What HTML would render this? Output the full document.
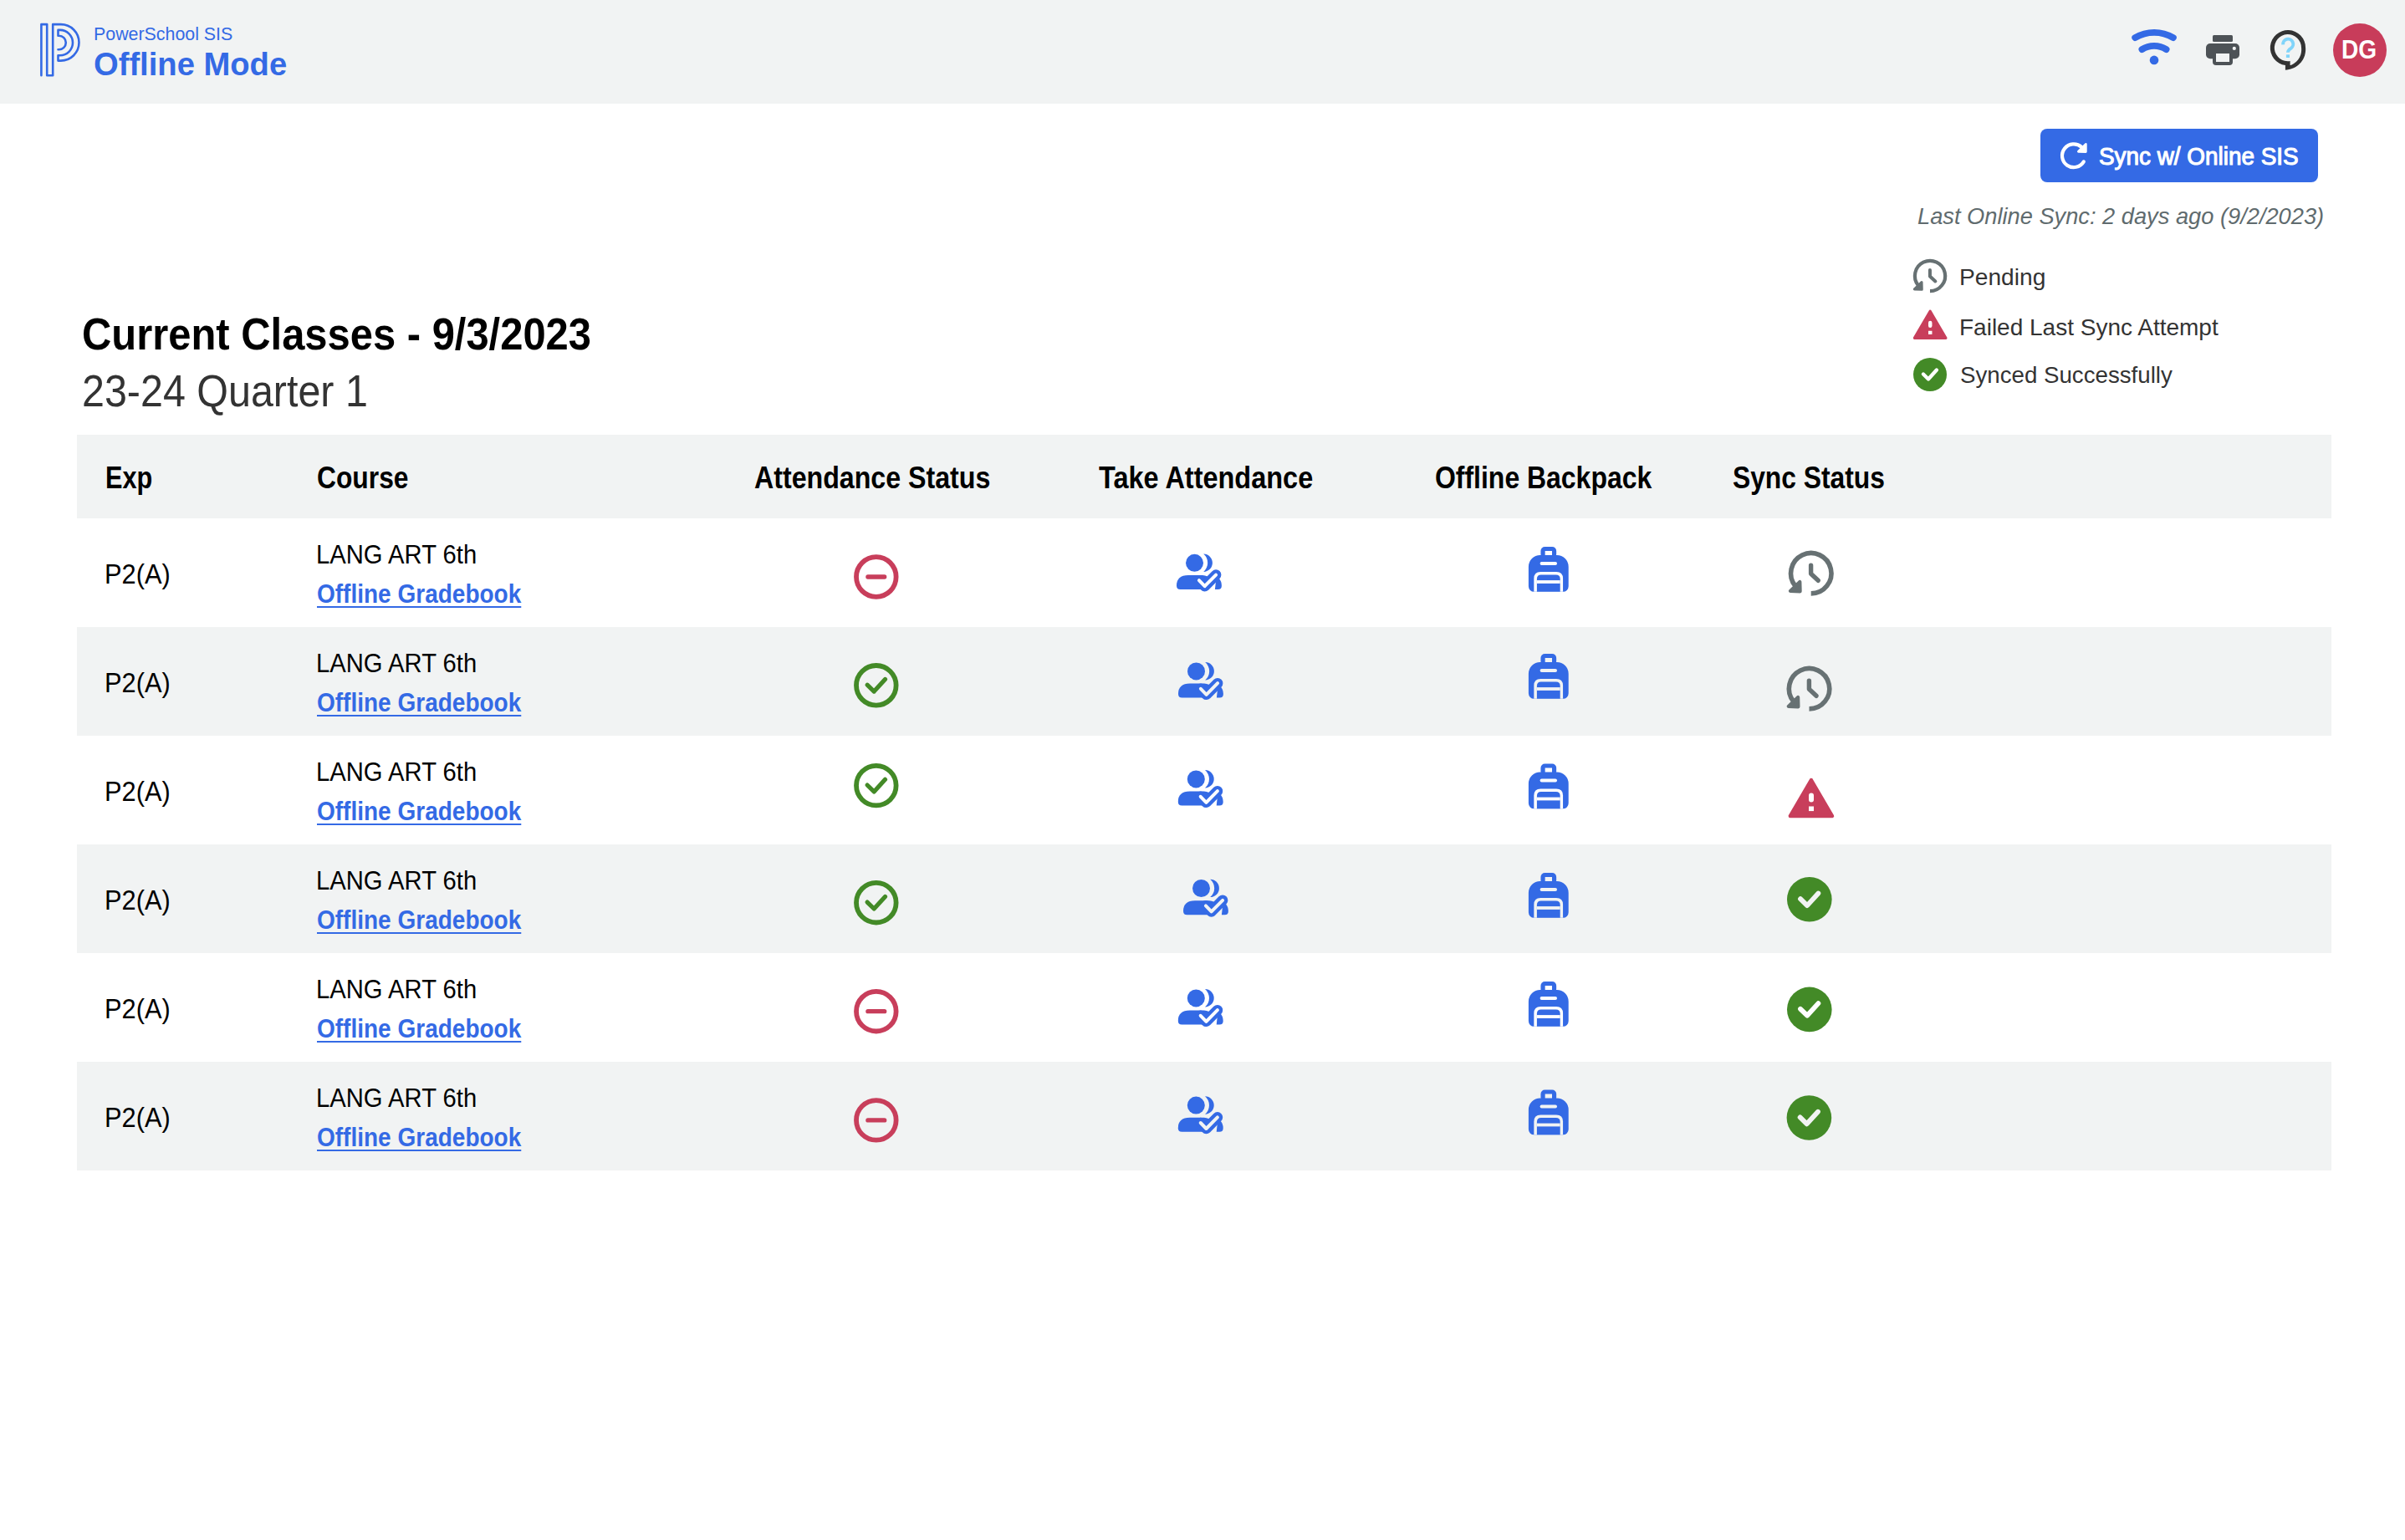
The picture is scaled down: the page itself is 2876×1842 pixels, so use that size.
<!DOCTYPE html>
<html><head><meta charset="utf-8">
<style>
html,body{margin:0;padding:0;}
body{width:2876px;height:1842px;position:relative;overflow:hidden;background:#fff;font-family:"Liberation Sans",sans-serif;}
.t{position:absolute;line-height:1;white-space:nowrap;transform-origin:0 0;}
.band{position:absolute;left:92px;width:2696px;background:#f1f3f3;}
a{color:inherit;}
</style></head><body>
<div style="position:absolute;left:0;top:0;width:2876px;height:124px;background:#f1f3f3;"></div>
<div style="position:absolute;left:2440px;top:154px;width:332px;height:64px;background:#346ae5;border-radius:8px;"></div>
<div class="band" style="top:520px;height:100px;"></div>
<div class="band" style="top:750px;height:130px;"></div>
<div class="band" style="top:1010px;height:130px;"></div>
<div class="band" style="top:1270px;height:130px;"></div>
<div class="t" style="left:111.86px;top:29.90px;font-size:22px;color:#346ae5;font-weight:normal;font-style:normal;transform:scaleX(0.9714);">PowerSchool SIS</div>
<div class="t" style="left:112.00px;top:58.00px;font-size:38px;color:#346ae5;font-weight:bold;font-style:normal;transform:scaleX(1.0044);">Offline Mode</div>
<div class="t" style="left:2799.91px;top:43.50px;font-size:31.5px;color:#fff;font-weight:bold;font-style:normal;transform:scaleX(0.8932);z-index:2;">DG</div>
<div class="t" style="left:2510.08px;top:173.30px;font-size:29px;color:#fff;font-weight:normal;font-style:normal;transform:scaleX(0.9611);z-index:2;-webkit-text-stroke:1.1px #fff;">Sync w/ Online SIS</div>
<div class="t" style="left:2293.43px;top:245.00px;font-size:28px;color:#5f6b6e;font-weight:normal;font-style:italic;transform:scaleX(0.9730);">Last Online Sync: 2 days ago (9/2/2023)</div>
<div class="t" style="left:2342.99px;top:317.80px;font-size:28px;color:#333;font-weight:normal;font-style:normal;transform:scaleX(1.0061);">Pending</div>
<div class="t" style="left:2343.00px;top:377.70px;font-size:28px;color:#333;font-weight:normal;font-style:normal;transform:scaleX(1.0000);">Failed Last Sync Attempt</div>
<div class="t" style="left:2344.01px;top:435.00px;font-size:28px;color:#333;font-weight:normal;font-style:normal;transform:scaleX(0.9883);">Synced Successfully</div>
<div class="t" style="left:97.69px;top:372.20px;font-size:54px;color:#000;font-weight:bold;font-style:normal;transform:scaleX(0.9058);">Current Classes - 9/3/2023</div>
<div class="t" style="left:97.58px;top:441.00px;font-size:53.5px;color:#333;font-weight:normal;font-style:normal;transform:scaleX(0.9051);">23-24 Quarter 1</div>
<div class="t" style="left:126.30px;top:553.70px;font-size:36px;color:#000;font-weight:bold;font-style:normal;transform:scaleX(0.8524);">Exp</div>
<div class="t" style="left:378.62px;top:553.70px;font-size:36px;color:#000;font-weight:bold;font-style:normal;transform:scaleX(0.8828);">Course</div>
<div class="t" style="left:901.61px;top:553.70px;font-size:36px;color:#000;font-weight:bold;font-style:normal;transform:scaleX(0.8933);">Attendance Status</div>
<div class="t" style="left:1313.80px;top:553.70px;font-size:36px;color:#000;font-weight:bold;font-style:normal;transform:scaleX(0.9018);">Take Attendance</div>
<div class="t" style="left:1715.61px;top:553.70px;font-size:36px;color:#000;font-weight:bold;font-style:normal;transform:scaleX(0.8873);">Offline Backpack</div>
<div class="t" style="left:2072.12px;top:553.70px;font-size:36px;color:#000;font-weight:bold;font-style:normal;transform:scaleX(0.8824);">Sync Status</div>
<div class="t" style="left:124.70px;top:670.00px;font-size:33px;color:#000;font-weight:normal;font-style:normal;transform:scaleX(0.9335);">P2(A)</div>
<div class="t" style="left:377.62px;top:647.75px;font-size:31px;color:#000;font-weight:normal;font-style:normal;transform:scaleX(0.9425);">LANG ART 6th</div>
<div class="t" style="left:378.60px;top:695.25px;font-size:31px;color:#346ae5;font-weight:bold;font-style:normal;transform:scaleX(0.9033);"><span style="text-decoration:underline;text-decoration-thickness:2px;text-underline-offset:4px;">Offline Gradebook</span></div>
<div class="t" style="left:124.70px;top:800.00px;font-size:33px;color:#000;font-weight:normal;font-style:normal;transform:scaleX(0.9335);">P2(A)</div>
<div class="t" style="left:377.62px;top:777.75px;font-size:31px;color:#000;font-weight:normal;font-style:normal;transform:scaleX(0.9425);">LANG ART 6th</div>
<div class="t" style="left:378.60px;top:825.25px;font-size:31px;color:#346ae5;font-weight:bold;font-style:normal;transform:scaleX(0.9033);"><span style="text-decoration:underline;text-decoration-thickness:2px;text-underline-offset:4px;">Offline Gradebook</span></div>
<div class="t" style="left:124.70px;top:930.00px;font-size:33px;color:#000;font-weight:normal;font-style:normal;transform:scaleX(0.9335);">P2(A)</div>
<div class="t" style="left:377.62px;top:907.75px;font-size:31px;color:#000;font-weight:normal;font-style:normal;transform:scaleX(0.9425);">LANG ART 6th</div>
<div class="t" style="left:378.60px;top:955.25px;font-size:31px;color:#346ae5;font-weight:bold;font-style:normal;transform:scaleX(0.9033);"><span style="text-decoration:underline;text-decoration-thickness:2px;text-underline-offset:4px;">Offline Gradebook</span></div>
<div class="t" style="left:124.70px;top:1060.00px;font-size:33px;color:#000;font-weight:normal;font-style:normal;transform:scaleX(0.9335);">P2(A)</div>
<div class="t" style="left:377.62px;top:1037.75px;font-size:31px;color:#000;font-weight:normal;font-style:normal;transform:scaleX(0.9425);">LANG ART 6th</div>
<div class="t" style="left:378.60px;top:1085.25px;font-size:31px;color:#346ae5;font-weight:bold;font-style:normal;transform:scaleX(0.9033);"><span style="text-decoration:underline;text-decoration-thickness:2px;text-underline-offset:4px;">Offline Gradebook</span></div>
<div class="t" style="left:124.70px;top:1190.00px;font-size:33px;color:#000;font-weight:normal;font-style:normal;transform:scaleX(0.9335);">P2(A)</div>
<div class="t" style="left:377.62px;top:1167.75px;font-size:31px;color:#000;font-weight:normal;font-style:normal;transform:scaleX(0.9425);">LANG ART 6th</div>
<div class="t" style="left:378.60px;top:1215.25px;font-size:31px;color:#346ae5;font-weight:bold;font-style:normal;transform:scaleX(0.9033);"><span style="text-decoration:underline;text-decoration-thickness:2px;text-underline-offset:4px;">Offline Gradebook</span></div>
<div class="t" style="left:124.70px;top:1320.00px;font-size:33px;color:#000;font-weight:normal;font-style:normal;transform:scaleX(0.9335);">P2(A)</div>
<div class="t" style="left:377.62px;top:1297.75px;font-size:31px;color:#000;font-weight:normal;font-style:normal;transform:scaleX(0.9425);">LANG ART 6th</div>
<div class="t" style="left:378.60px;top:1345.25px;font-size:31px;color:#346ae5;font-weight:bold;font-style:normal;transform:scaleX(0.9033);"><span style="text-decoration:underline;text-decoration-thickness:2px;text-underline-offset:4px;">Offline Gradebook</span></div>
<svg style="position:absolute;left:0;top:0;z-index:1" width="2876" height="1842" viewBox="0 0 2876 1842">
<defs>
<symbol id="hist" viewBox="0 0 72 72" overflow="visible">
 <path d="M36 60.2 A24.2 24.2 0 1 0 17.3 51.3" fill="none" stroke="currentColor" stroke-width="5.6"/>
 <path d="M11.2 57.2 L22.6 46.2 L22.9 57.6 Z" fill="currentColor" stroke="currentColor" stroke-width="4.2" stroke-linejoin="round"/>
 <path d="M35.9 26.6 V36.6 L44.5 44.6" fill="none" stroke="currentColor" stroke-width="5.4" stroke-linecap="round" stroke-linejoin="round"/>
</symbol>
<symbol id="warn" viewBox="0 0 64 64" overflow="visible">
 <path d="M33.9 8 L59 51 H8.8 Z" fill="#c83e5b" stroke="#c83e5b" stroke-width="4.4" stroke-linejoin="round"/>
 <rect x="31" y="23.5" width="6" height="11" rx="3" fill="var(--bg,#fff)"/>
 <rect x="31" y="39.5" width="6" height="5.6" fill="var(--bg,#fff)"/>
</symbol>
<symbol id="okfill" viewBox="0 0 64 64" overflow="visible">
 <circle cx="32" cy="31.8" r="26.8" fill="#438a27"/>
 <path d="M21.2 31.2 L29.3 39.1 L42.6 24.5" fill="none" stroke="var(--bg,#fff)" stroke-width="5.8" stroke-linecap="round" stroke-linejoin="round"/>
</symbol>
<symbol id="okring" viewBox="0 0 64 64" overflow="visible">
 <circle cx="31.9" cy="31.8" r="23.8" fill="none" stroke="#438a27" stroke-width="5.8"/>
 <path d="M21.2 31.2 L29.3 39.1 L42.6 24.5" fill="none" stroke="#438a27" stroke-width="5.2" stroke-linecap="round" stroke-linejoin="round"/>
</symbol>
<symbol id="minusring" viewBox="0 0 64 64" overflow="visible">
 <circle cx="31.9" cy="31.8" r="23.8" fill="none" stroke="#c83e5b" stroke-width="5.8"/>
 <path d="M22 31.8 H41.8" fill="none" stroke="#c83e5b" stroke-width="5.3" stroke-linecap="round"/>
</symbol>
<symbol id="att" viewBox="0 0 70 60" overflow="visible">
 <circle cx="28.5" cy="18.3" r="10.5" fill="#346ae5"/>
 <path d="M39.2 7.5 A10.7 10.7 0 0 1 39.2 28.9 A14 14 0 0 0 39.2 7.5 Z" fill="#346ae5"/>
 <path d="M7 45.5 Q7 33 21 33 H38 Q41 33 44 34.5 V50 H11.5 Q7 50 7 45.5 Z" fill="#346ae5"/>
 <path d="M52.9 50 L53.9 41 L57.5 36.5 Q60.8 40 60.9 45.5 Q61 50 56.5 50 Z" fill="#346ae5"/>
 <path d="M33.9 39.2 L40.65 46.2 L54.1 32.6" fill="none" stroke="#346ae5" stroke-width="12.6" stroke-linecap="round" stroke-linejoin="round"/>
 <path d="M33.9 39.2 L40.65 46.2 L54.1 32.6" fill="none" stroke="var(--bg,#fff)" stroke-width="4" stroke-linecap="round" stroke-linejoin="round"/>
</symbol>
<symbol id="pack" viewBox="0 0 64 64" overflow="visible">
 <rect x="22.65" y="6" width="18.7" height="14" rx="5" fill="#346ae5"/>
 <rect x="27.85" y="11" width="8.35" height="6" fill="var(--bg,#fff)"/>
 <path d="M22 16 H42 A13.9 13.9 0 0 1 55.9 29.9 V53.3 A6.55 6.55 0 0 1 49.35 59.85 H14.65 A6.55 6.55 0 0 1 8.1 53.3 V29.9 A13.9 13.9 0 0 1 22 16 Z" fill="#346ae5"/>
 <rect x="21.8" y="24.1" width="20.4" height="3.95" rx="1.97" fill="var(--bg,#fff)"/>
 <path d="M14.55 59.85 V44 Q14.55 35.95 22.55 35.95 H41.25 Q49.25 35.95 49.25 44 V59.85 Z" fill="var(--bg,#fff)"/>
 <path d="M18.1 59.85 V44.5 Q18.1 39.5 23.1 39.5 H40.9 Q45.9 39.5 45.9 44.5 V59.85 Z" fill="#346ae5"/>
 <rect x="18.1" y="46.1" width="27.8" height="3.8" fill="var(--bg,#fff)"/>
</symbol>
</defs>
<g transform="translate(44,24)" fill="none" stroke="#346ae5" stroke-width="2.6" stroke-linejoin="round" stroke-linecap="round">
 <path d="M5.4 66.3 V5.1 H12.2 V66.3 H19.2 V5.1 H28.75 A21.75 21.75 0 0 1 28.75 48.6 H25.5 V42.3 H27.8 A15.2 15.2 0 0 0 27.8 11.9 H25.5 V18.7 H26.5 A8.3 8.3 0 0 1 26.5 35.3 H25.5"/>
</g>
<g fill="none" stroke="#346ae5" stroke-width="7.8" stroke-linecap="round">
 <path d="M2553.2 45.1 A44.6 44.6 0 0 1 2598.9 45.1"/>
 <path d="M2561.4 59.1 A26.9 26.9 0 0 1 2590.6 59.1"/>
</g>
<circle cx="2576" cy="71.9" r="5.3" fill="#346ae5"/>
<g fill="#4d5256">
 <rect x="2646" y="42" width="24" height="8" rx="1.5"/>
 <rect x="2638" y="52" width="40" height="18.2" rx="5"/>
 <path d="M2646 60 H2670 V74 Q2670 78 2666 78 H2650 Q2646 78 2646 74 Z"/>
</g>
<rect x="2650" y="64" width="16" height="10" fill="#f1f3f3"/>
<circle cx="2671.8" cy="57.9" r="2.1" fill="#f1f3f3"/>
<g transform="translate(2708,30)">
 <path d="M24.90 53.70 L24.90 48.08 A21.15 21.15 0 1 1 49.10 27.15 L49.14 28.94 L49.08 30.74 L48.89 32.56 L48.56 34.37 L48.09 36.18 L47.47 37.96 L46.71 39.71 L45.80 41.41 L44.74 43.05 L43.53 44.63 L42.19 46.11 L40.70 47.50 L39.09 48.79 L37.35 49.94 L35.50 50.97 L33.54 51.85 L31.49 52.57 L29.36 53.12 L27.16 53.50 L24.90 53.70 Z M30.60 43.03 A16.1 16.1 0 1 1 44.05 27.15 L44.11 28.30 L44.14 29.46 L44.10 30.63 L44.00 31.82 L43.83 33.02 L43.57 34.22 L43.24 35.41 L42.82 36.61 L42.31 37.78 L41.72 38.94 L41.04 40.08 L40.28 41.18 L39.43 42.24 L38.49 43.25 L37.47 44.22 L36.36 45.12 L35.18 45.96 L33.92 46.72 L32.59 47.40 L31.20 48.00 L30.6 48 Z" fill="#333" fill-rule="evenodd"/>
 <path d="M22.2 23.4 A6.05 6.05 0 1 1 31.8 27.6 C29.2 29.3 27.95 30.2 27.95 32.8" fill="none" stroke="#81d4fa" stroke-width="3.9"/>
 <rect x="25.9" y="35.3" width="4.1" height="3.7" fill="#81d4fa"/>
</g>
<circle cx="2822" cy="60" r="32" fill="#c83c5a"/>
<path d="M2489.2 175.9 A13.9 13.9 0 1 0 2491.8 193.4" fill="none" stroke="#fff" stroke-width="4.2" stroke-linecap="round"/>
<path d="M2485.4 181.3 L2494.3 181.5 L2494.3 172.5 Z" fill="#fff" stroke="#fff" stroke-width="2.8" stroke-linejoin="round"/>
<use href="#hist" x="2281.03" y="303.03" width="53.93" height="53.93" style="color:#677173"/>
<use href="#warn" x="2282.85" y="366.27" width="47.76" height="47.76"/>
<use href="#okfill" x="2284.12" y="424.27" width="47.76" height="47.76"/>
<use href="#minusring" x="1015.90" y="658.20" width="64" height="64" style="--bg:#fff"/>
<use href="#att" x="1400.00" y="655.00" width="70" height="60" style="--bg:#fff"/>
<use href="#pack" x="1819.80" y="648.00" width="64" height="64" style="--bg:#fff"/>
<use href="#hist" x="2129.70" y="649.70" width="72" height="72" style="color:#677173"/>
<use href="#okring" x="1015.90" y="788.00" width="64" height="64" style="--bg:#f1f3f3"/>
<use href="#att" x="1402.00" y="784.60" width="70" height="60" style="--bg:#f1f3f3"/>
<use href="#pack" x="1819.80" y="776.00" width="64" height="64" style="--bg:#f1f3f3"/>
<use href="#hist" x="2127.50" y="787.70" width="72" height="72" style="color:#677173"/>
<use href="#okring" x="1015.90" y="907.80" width="64" height="64" style="--bg:#fff"/>
<use href="#att" x="1401.80" y="913.60" width="70" height="60" style="--bg:#fff"/>
<use href="#pack" x="1819.80" y="907.50" width="64" height="64" style="--bg:#fff"/>
<use href="#warn" x="2132.00" y="925.00" width="64" height="64" style="--bg:#fff"/>
<use href="#okring" x="1015.90" y="1047.90" width="64" height="64" style="--bg:#f1f3f3"/>
<use href="#att" x="1408.00" y="1044.20" width="70" height="60" style="--bg:#f1f3f3"/>
<use href="#pack" x="1819.80" y="1038.00" width="64" height="64" style="--bg:#f1f3f3"/>
<use href="#okfill" x="2131.80" y="1044.00" width="64" height="64" style="--bg:#f1f3f3"/>
<use href="#minusring" x="1015.90" y="1177.90" width="64" height="64" style="--bg:#fff"/>
<use href="#att" x="1401.80" y="1175.60" width="70" height="60" style="--bg:#fff"/>
<use href="#pack" x="1819.80" y="1168.00" width="64" height="64" style="--bg:#fff"/>
<use href="#okfill" x="2131.80" y="1175.60" width="64" height="64" style="--bg:#fff"/>
<use href="#minusring" x="1015.90" y="1308.10" width="64" height="64" style="--bg:#f1f3f3"/>
<use href="#att" x="1401.80" y="1303.80" width="70" height="60" style="--bg:#f1f3f3"/>
<use href="#pack" x="1819.80" y="1297.50" width="64" height="64" style="--bg:#f1f3f3"/>
<use href="#okfill" x="2131.40" y="1305.20" width="64" height="64" style="--bg:#f1f3f3"/>
</svg>
</body></html>
